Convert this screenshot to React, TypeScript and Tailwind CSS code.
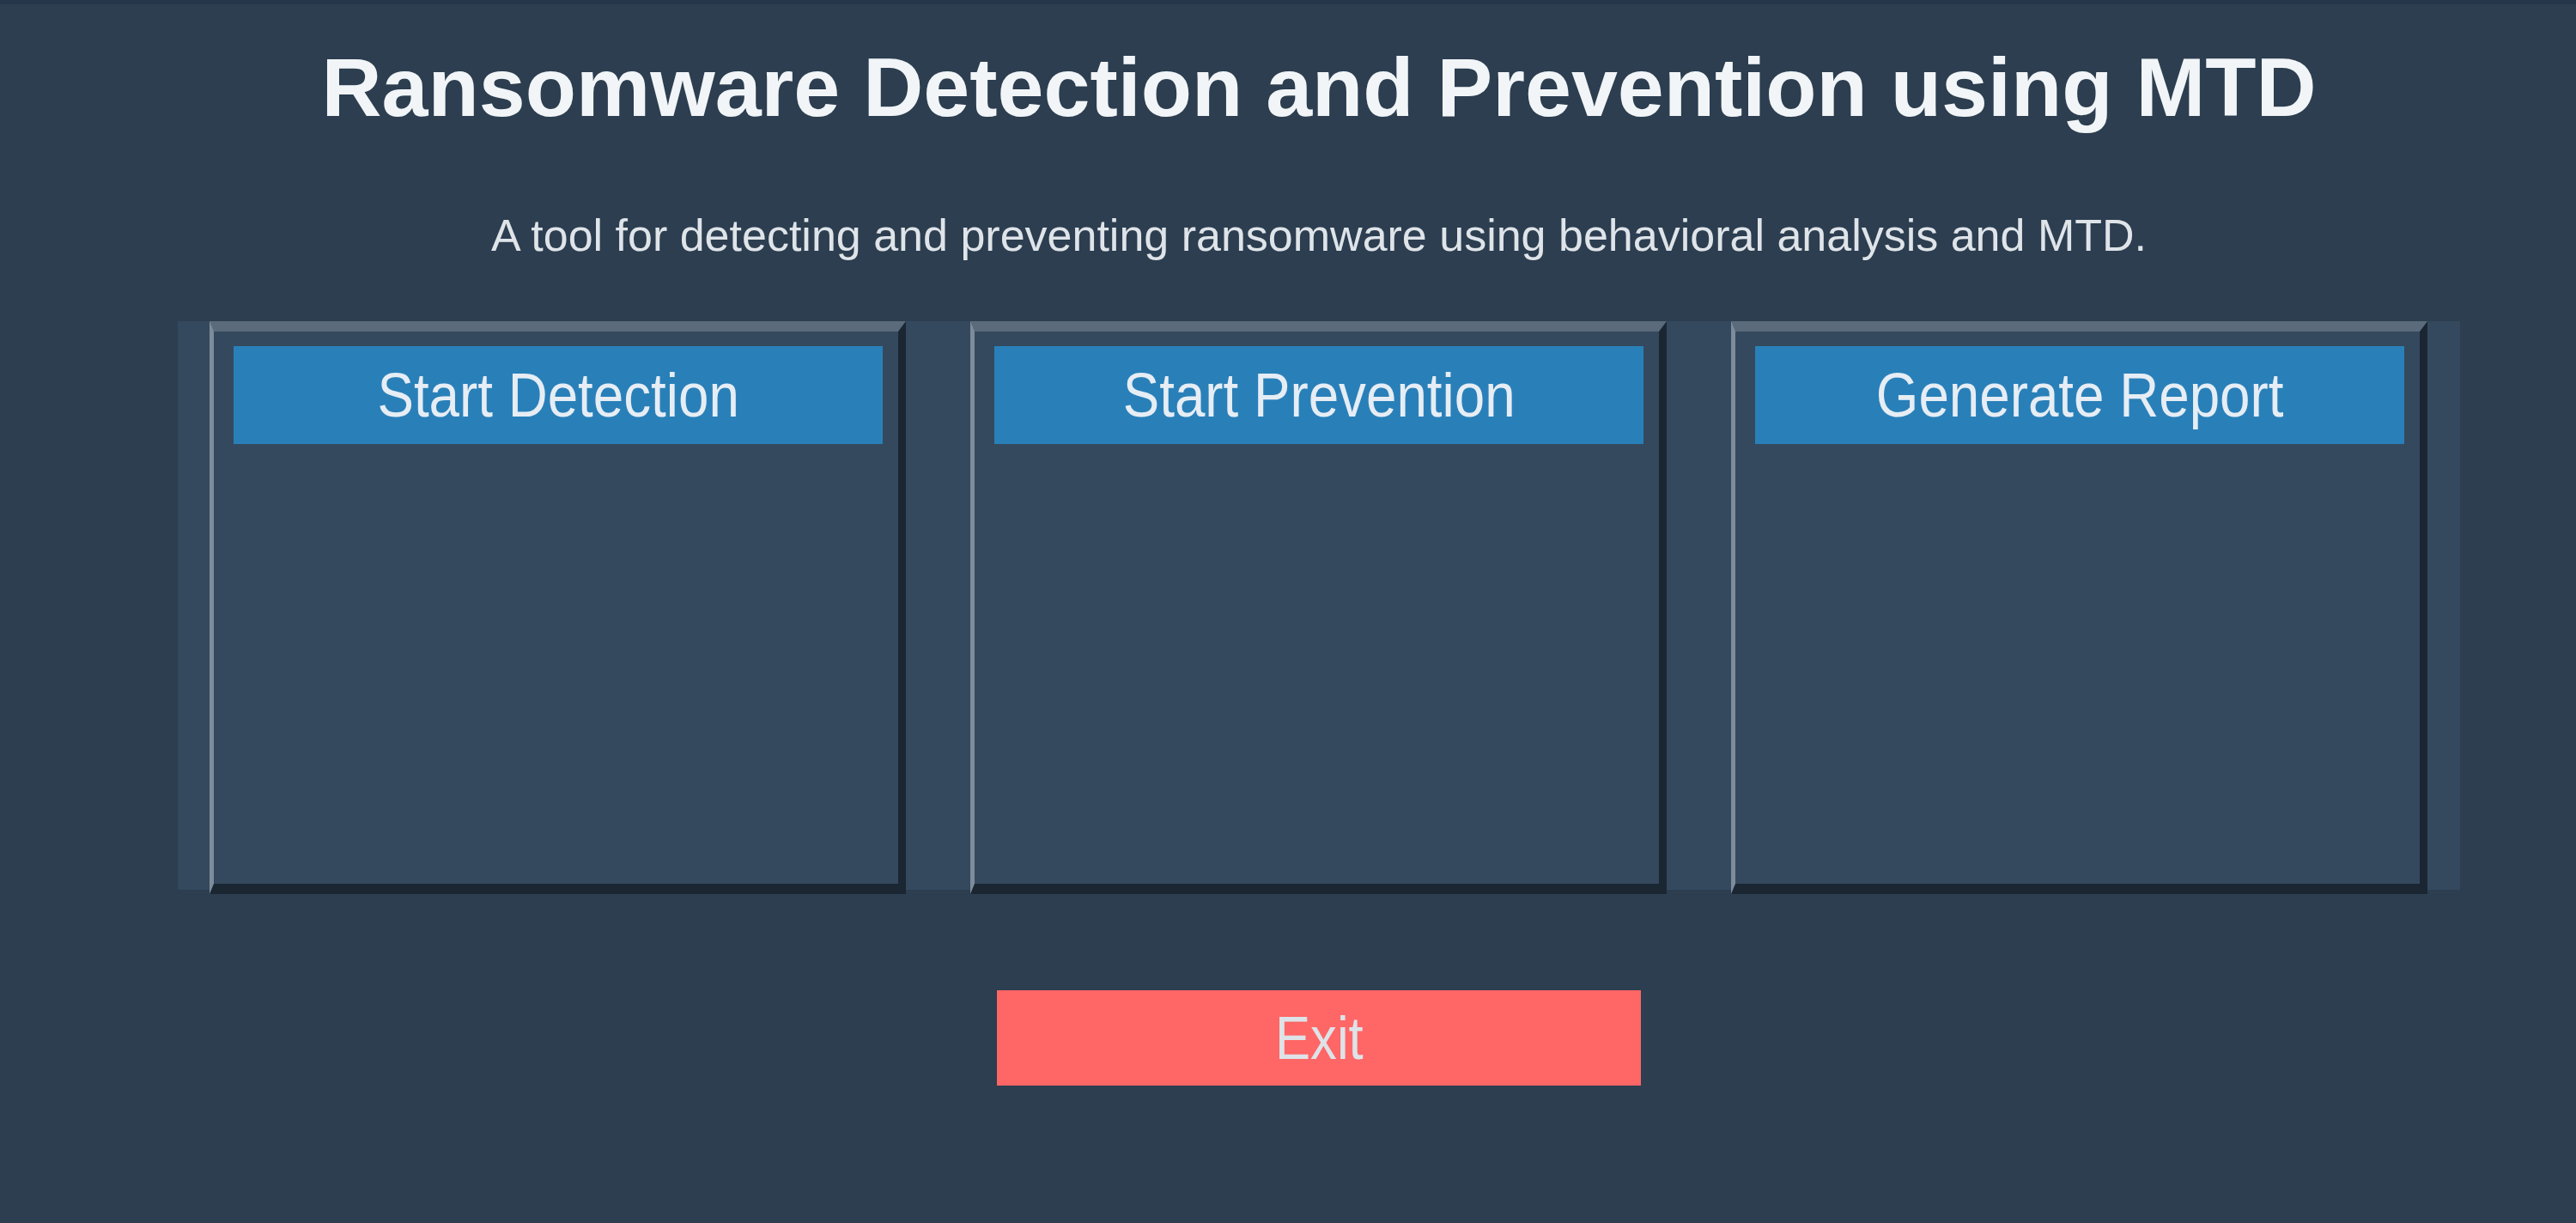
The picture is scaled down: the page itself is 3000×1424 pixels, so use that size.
import React from "react";

const font = { fontFamily: '"Liberation Sans", Arial, sans-serif' };

function Card({ label }: { label: string }) {
  return (
    <div className="w-[811px] h-[667px] shrink-0 bg-[#34495e] border-t-[12px] border-l-[5px] border-r-[9px] border-b-[12px] border-t-[#5b6b7c] border-l-[#7d8c9b] border-r-[#1b2633] border-b-[#1b2633] flex flex-col">
      <div className="mt-[17px] ml-[23px] mr-[18px] h-[114px] bg-[#2980b9] flex items-center justify-center">
        <span className="inline-block text-[72px] leading-none text-[#e6edf4] scale-x-[0.885] whitespace-nowrap">
          {label}
        </span>
      </div>
    </div>
  );
}

export default function App() {
  return (
    <div
      style={font}
      className="w-[3000px] h-[1424px] bg-[#2c3e50] border-t-[5px] border-t-[#26364a] overflow-hidden"
    >
      <div className="w-full pl-[72px] flex flex-col items-center">
        <h1 className="mt-[48px] text-[97px] leading-none font-bold text-[#f2f5f7] whitespace-nowrap">
          Ransomware Detection and Prevention using MTD
        </h1>
        <p className="mt-[98px] text-[52px] leading-none text-[#dfe4e9] whitespace-nowrap">
          A tool for detecting and preventing ransomware using behavioral analysis and MTD.
        </p>
        <div className="mt-[74px] w-[2658px] h-[662px] bg-[#34495e] px-[37px] flex items-start gap-[75px]">
          <Card label="Start Detection" />
          <Card label="Start Prevention" />
          <Card label="Generate Report" />
        </div>
        <button className="mt-[117px] w-[750px] h-[111px] bg-[#ff6666] flex items-center justify-center">
          <span className="inline-block text-[70px] leading-none text-[#dde3e8] scale-x-[0.88]">
            Exit
          </span>
        </button>
      </div>
    </div>
  );
}
